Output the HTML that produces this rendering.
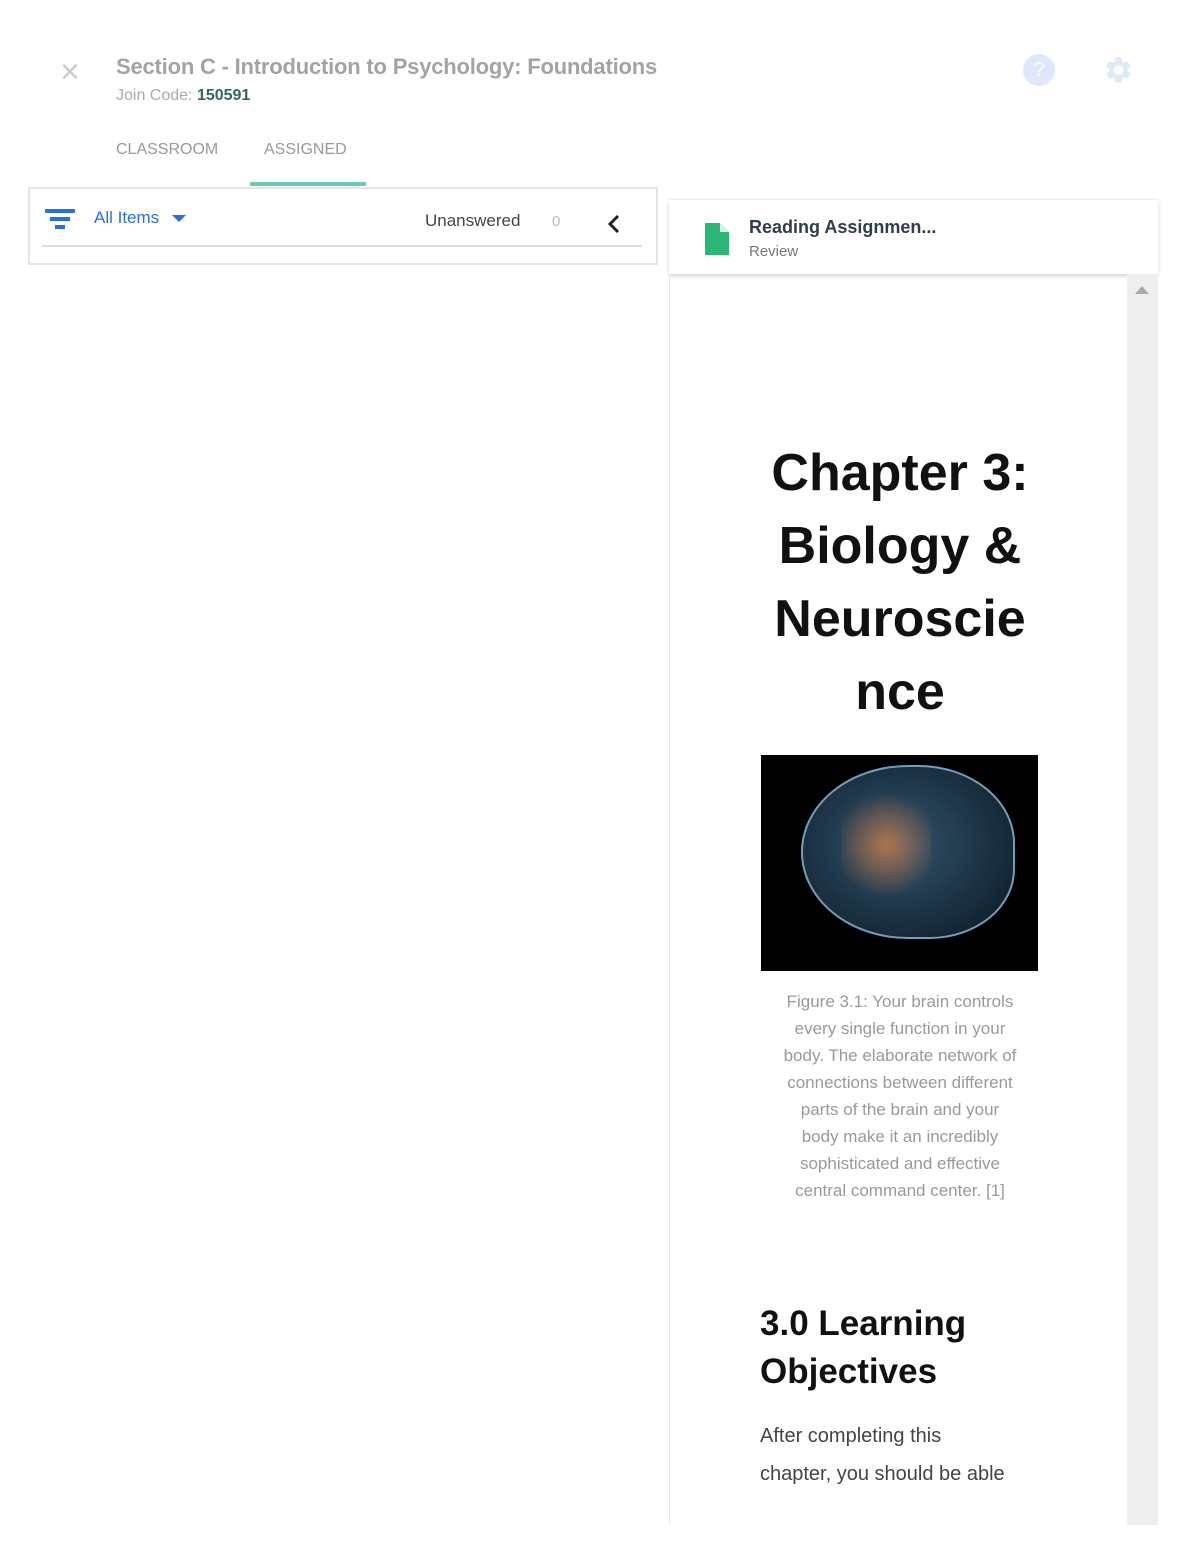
<!DOCTYPE html>
<html><head><style>
body{margin:0;width:1200px;height:1553px;background:#fff;font-family:"Liberation Sans",sans-serif;position:relative;overflow:hidden}
.a{position:absolute}
</style></head><body>
<div class="a" style="left:60px;top:52px;font-size:34px;color:#ccc;line-height:40px">×</div>
<div class="a" style="left:116px;top:54px;font-size:22px;font-weight:bold;color:#a3a3a3;letter-spacing:-0.2px">Section C - Introduction to Psychology: Foundations</div>
<div class="a" style="left:116px;top:87px;font-size:16px;color:#aaa">Join Code: <b style="color:#2d6a57">150591</b></div>
<div class="a" style="left:1023px;top:54px;width:32px;height:32px;border-radius:50%;background:#dde9fb;color:#fff;text-align:center;line-height:32px;font-size:20px">?</div>
<svg class="a" style="left:1100px;top:53px" width="34" height="34" viewBox="0 0 24 24"><path fill="#dde9fb" d="M19.4 13a7.5 7.5 0 000-2l2.1-1.6-2-3.5-2.5 1a7.3 7.3 0 00-1.7-1L15 3h-4l-.4 2.9a7.3 7.3 0 00-1.7 1l-2.5-1-2 3.5L6.6 11a7.5 7.5 0 000 2l-2.1 1.6 2 3.5 2.5-1a7.3 7.3 0 001.7 1L11 21h4l.4-2.9a7.3 7.3 0 001.7-1l2.5 1 2-3.5zM13 15.5a3.5 3.5 0 110-7 3.5 3.5 0 010 7z"/></svg>
<div class="a" style="left:116px;top:141px;font-size:16px;color:#999">CLASSROOM</div>
<div class="a" style="left:264px;top:141px;font-size:16px;color:#999">ASSIGNED</div>
<div class="a" style="left:250px;top:182px;width:116px;height:4px;background:#6cc9b5"></div>
<div class="a" style="left:28px;top:187px;width:626px;height:74px;border:2px solid #e4e4e4"></div>
<div class="a" style="left:42px;top:245px;width:600px;height:2px;background:#ddd"></div>
<div class="a" style="left:45px;top:209px;width:30px;height:4px;background:#2a6fdc"></div>
<div class="a" style="left:50px;top:217px;width:20px;height:4px;background:#2a6fdc"></div>
<div class="a" style="left:55px;top:225px;width:10px;height:4px;background:#2a6fdc"></div>
<div class="a" style="left:94px;top:208px;font-size:17px;color:#2a6fdc">All Items</div>
<div class="a" style="left:172px;top:215px;border-left:7px solid transparent;border-right:7px solid transparent;border-top:7px solid #2a6fdc"></div>
<div class="a" style="left:425px;top:211px;font-size:17px;color:#444">Unanswered</div>
<div class="a" style="left:552px;top:213px;font-size:15px;color:#bbb">0</div>
<svg class="a" style="left:606px;top:214px" width="16" height="20"><path d="M12 2L4 10l8 8" stroke="#222" stroke-width="3" fill="none"/></svg>
<div class="a" style="left:669px;top:199px;width:489px;height:74px;background:#fff;box-shadow:0 2px 4px rgba(0,0,0,.18);border-top:1px solid #eee"></div>
<svg class="a" style="left:705px;top:223px" width="24" height="32"><path d="M0 0h15l9 9v23H0z" fill="#2bb673"/><path d="M15 0v9h9" fill="#fff" opacity=".8"/></svg>
<div class="a" style="left:749px;top:217px;font-size:18px;font-weight:bold;color:#2e3e4e">Reading Assignmen...</div>
<div class="a" style="left:749px;top:243px;font-size:15px;color:#777">Review</div>
<div class="a" style="left:669px;top:274px;width:1px;height:1251px;background:#e6e6e6"></div>
<div class="a" style="left:1127px;top:274px;width:31px;height:1251px;background:#eee"></div>
<div class="a" style="left:1135px;top:286px;border-left:7px solid transparent;border-right:7px solid transparent;border-bottom:8px solid #aaa"></div>
<div class="a" style="left:740px;top:437px;width:320px;text-align:center;font-size:52px;font-weight:bold;line-height:73px;color:#111">Chapter 3: Biology &amp; Neuroscie nce</div>
<div class="a" style="left:761px;top:755px;width:277px;height:216px;background:#000;overflow:hidden">
<div class="a" style="left:40px;top:10px;width:210px;height:170px;border-radius:50% 45% 40% 50%;background:radial-gradient(ellipse at 45% 45%,#3a5f7a,#1d3548 60%,#0d1a24);border:2px solid #7fb0d0;opacity:.9"></div>
<div class="a" style="left:80px;top:30px;width:90px;height:120px;background:radial-gradient(circle,rgba(255,140,60,.6),transparent 70%)"></div>
</div>
<div class="a" style="left:740px;top:988px;width:320px;text-align:center;font-size:17px;line-height:27px;color:#999">Figure 3.1: Your brain controls<br>every single function in your<br>body. The elaborate network of<br>connections between different<br>parts of the brain and your<br>body make it an incredibly<br>sophisticated and effective<br>central command center. [1]</div>
<div class="a" style="left:760px;top:1300px;font-size:35px;font-weight:bold;line-height:48px;color:#111">3.0 Learning<br>Objectives</div>
<div class="a" style="left:760px;top:1417px;width:300px;font-size:20px;line-height:38px;color:#444">After completing this<br>chapter, you should be able</div>
</body></html>
